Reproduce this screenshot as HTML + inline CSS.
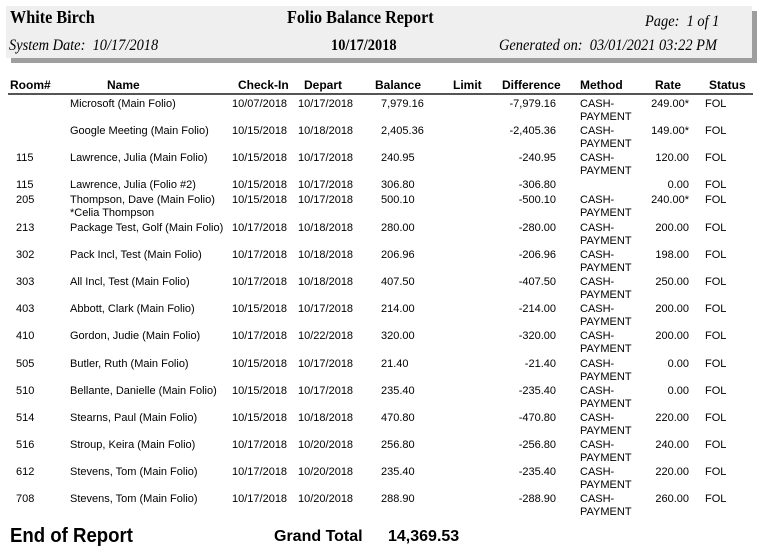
<!DOCTYPE html>
<html><head><meta charset="utf-8"><style>
*{margin:0;padding:0}
body{width:763px;height:557px;background:#fff;position:relative;overflow:hidden;font-family:"Liberation Sans",Arial,sans-serif;color:#000}
.a{position:absolute;white-space:nowrap;line-height:13px}
.s{font-family:"Liberation Serif",serif;transform:scaleX(.9);transform-origin:left}
.r{font-size:11px}
.h{font-size:12px;font-weight:bold}
</style></head><body>
<div class="a" style="left:11px;top:11px;width:746px;height:52px;background:#9e9e9e"></div>
<div class="a" style="left:6px;top:6px;width:746px;height:52px;background:#efefef"></div>
<div class="a s" style="left:10px;top:7px;font-size:18px;font-weight:bold;line-height:20px">White Birch</div>
<div class="a s" style="left:287px;top:7px;font-size:18px;font-weight:bold;line-height:20px">Folio Balance Report</div>
<div class="a s" style="left:645px;top:13px;font-size:16px;font-style:italic;line-height:18px">Page:&nbsp; 1 of 1</div>
<div class="a s" style="left:9px;top:37px;font-size:16px;font-style:italic;line-height:18px">System Date:&nbsp; 10/17/2018</div>
<div class="a s" style="left:331px;top:37px;font-size:16px;font-weight:bold;line-height:18px">10/17/2018</div>
<div class="a s" style="left:499px;top:37px;font-size:16px;font-style:italic;line-height:18px">Generated on:&nbsp; 03/01/2021 03:22 PM</div>

<div class="a h" style="left:10px;top:79px">Room#</div>
<div class="a h" style="left:107px;top:79px">Name</div>
<div class="a h" style="left:238px;top:79px">Check-In</div>
<div class="a h" style="left:304px;top:79px">Depart</div>
<div class="a h" style="left:375px;top:79px">Balance</div>
<div class="a h" style="left:453px;top:79px">Limit</div>
<div class="a h" style="left:502px;top:79px">Difference</div>
<div class="a h" style="left:580px;top:79px">Method</div>
<div class="a h" style="left:655px;top:79px">Rate</div>
<div class="a h" style="left:709px;top:79px">Status</div>
<div class="a" style="left:8px;top:93px;width:745px;height:2px;background:#555"></div>
<div id="rows"></div>
<script>
var d=[
[98,"","Microsoft (Main Folio)","10/07/2018","10/17/2018","7,979.16","-7,979.16",1,"249.00*"],
[125,"","Google Meeting (Main Folio)","10/15/2018","10/18/2018","2,405.36","-2,405.36",1,"149.00*"],
[152,"115","Lawrence, Julia (Main Folio)","10/15/2018","10/17/2018","240.95","-240.95",1,"120.00"],
[179,"115","Lawrence, Julia (Folio #2)","10/15/2018","10/17/2018","306.80","-306.80",0,"0.00"],
[194,"205","Thompson, Dave (Main Folio)<br>*Celia Thompson","10/15/2018","10/17/2018","500.10","-500.10",1,"240.00*"],
[222,"213","Package Test, Golf (Main Folio)","10/17/2018","10/18/2018","280.00","-280.00",1,"200.00"],
[249,"302","Pack Incl, Test (Main Folio)","10/17/2018","10/18/2018","206.96","-206.96",1,"198.00"],
[276,"303","All Incl, Test (Main Folio)","10/17/2018","10/18/2018","407.50","-407.50",1,"250.00"],
[303,"403","Abbott, Clark (Main Folio)","10/15/2018","10/17/2018","214.00","-214.00",1,"200.00"],
[330,"410","Gordon, Judie (Main Folio)","10/17/2018","10/22/2018","320.00","-320.00",1,"200.00"],
[358,"505","Butler, Ruth (Main Folio)","10/15/2018","10/17/2018","21.40","-21.40",1,"0.00"],
[385,"510","Bellante, Danielle (Main Folio)","10/15/2018","10/17/2018","235.40","-235.40",1,"0.00"],
[412,"514","Stearns, Paul (Main Folio)","10/15/2018","10/18/2018","470.80","-470.80",1,"220.00"],
[439,"516","Stroup, Keira (Main Folio)","10/17/2018","10/20/2018","256.80","-256.80",1,"240.00"],
[466,"612","Stevens, Tom (Main Folio)","10/17/2018","10/20/2018","235.40","-235.40",1,"220.00"],
[493,"708","Stevens, Tom (Main Folio)","10/17/2018","10/20/2018","288.90","-288.90",1,"260.00"]];
var h="";
d.forEach(function(r){var t=r[0];
function c(x,s,st){h+='<div class="a r" style="left:'+x+'px;top:'+t+'px;'+(st||'')+'">'+s+'</div>';}
c(16,r[1]);c(70,r[2]);c(232,r[3]);c(298,r[4]);c(381,r[5]);
c(456,r[6],'width:100px;text-align:right');
if(r[7])c(580,'CASH-<br>PAYMENT');
c(620,r[8],'width:69px;text-align:right');
c(705,'FOL');});
document.getElementById('rows').innerHTML=h;
</script>
<div class="a" style="left:10px;top:524px;font-size:20px;font-weight:bold;line-height:24px;transform:scaleX(.93);transform-origin:left">End of Report</div>
<div class="a" style="left:274px;top:527px;font-size:16px;font-weight:bold;line-height:20px">Grand Total</div>
<div class="a" style="left:388px;top:527px;font-size:16px;font-weight:bold;line-height:20px">14,369.53</div>
</body></html>
